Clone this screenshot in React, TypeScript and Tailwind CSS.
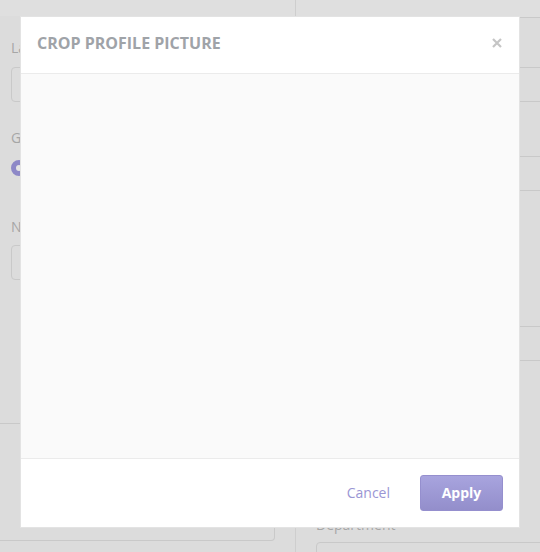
export default function App() {
  return (
    <div className="relative w-[540px] h-[552px] overflow-hidden bg-[#dcdcdc] font-['Open_Sans',sans-serif]">
      {/* underlying page (dimmed) */}
      <div className="flex h-full">
        <div className="w-[296px] shrink-0 border-r border-[#cecece] flex flex-col">
          <div className="h-[16px] shrink-0 bg-[#dfdfdf]" />
          <div className="pl-[11px] flex flex-col">
            <div className="mt-[22px] text-[14px] leading-[20px] text-[#a6a6a6]">Last name</div>
            <div className="mt-[9px] h-[35px] w-[264px] border border-[#c9c9c9] rounded-[4px]" />
            <div className="mt-[26px] text-[14px] leading-[20px] text-[#a6a6a6]">Gender</div>
            <div className="mt-[12px] flex items-start h-[16px]">
              <div className="w-[16px] h-[16px] shrink-0 rounded-full border-[5px] border-[#8d88c7] bg-[#e4e4e4]" />
            </div>
            <div className="mt-[41px] text-[14px] leading-[20px] text-[#a6a6a6]">Nationality</div>
            <div className="mt-[8px] h-[35px] w-[264px] border border-[#c9c9c9] rounded-[4px]" />
          </div>
          <div className="mt-[143px] h-[118px] w-[275px] border-t border-r border-b border-[#c9c9c9] rounded-br-[4px]" />
        </div>
        <div className="flex-1 flex flex-col">
          <div className="h-[18px] shrink-0 bg-[#dfdfdf] border-b border-[#c9c9c9]" />
          <div className="pl-[20px] flex flex-col">
            <div className="mt-[49px] h-[35px] w-[260px] border border-[#c9c9c9] rounded-[4px]" />
            <div className="mt-[54px] h-[35px] w-[260px] border border-[#c9c9c9] rounded-[4px]" />
            <div className="mt-[135px] h-[35px] w-[260px] border border-[#c9c9c9] rounded-[4px]" />
            <div className="mt-[154px] text-[14px] leading-[20px] text-[#a6a6a6]">Department</div>
            <div className="mt-[7px] h-[35px] w-[260px] border border-[#c9c9c9] rounded-[4px]" />
          </div>
        </div>
      </div>

      {/* modal */}
      <div className="absolute top-[16px] left-[20px] w-[500px] h-[512px] bg-white border border-[#e3e3e3] flex flex-col">
        <div className="h-[57px] shrink-0 border-b border-[#ebebeb] flex items-start justify-between pl-[16px] pr-[17px] pt-[15px]">
          <div className="text-[16px] leading-[22px] font-bold text-[#9fa3a8] uppercase">Crop Profile Picture</div>
          <svg width="10" height="10" viewBox="0 0 10 10" className="mt-[6px]">
            <path d="M1 1L9 9M9 1L1 9" stroke="#c5c5c5" strokeWidth="2.2" strokeLinecap="butt" />
          </svg>
        </div>
        <div className="flex-1 bg-[#fafafa] border-b border-[#ebebeb]" />
        <div className="h-[68px] shrink-0 flex items-center justify-end pr-[16px]">
          <span className="mr-[30px] text-[14px] leading-[20px] text-[#9a96d4]">Cancel</span>
          <button className="h-[36px] w-[83px] rounded-[3px] border border-[#958fce] bg-linear-to-b from-[#a8a4de] to-[#938ecb] text-white font-bold text-[14px] leading-[20px]">
            Apply
          </button>
        </div>
      </div>
    </div>
  );
}
